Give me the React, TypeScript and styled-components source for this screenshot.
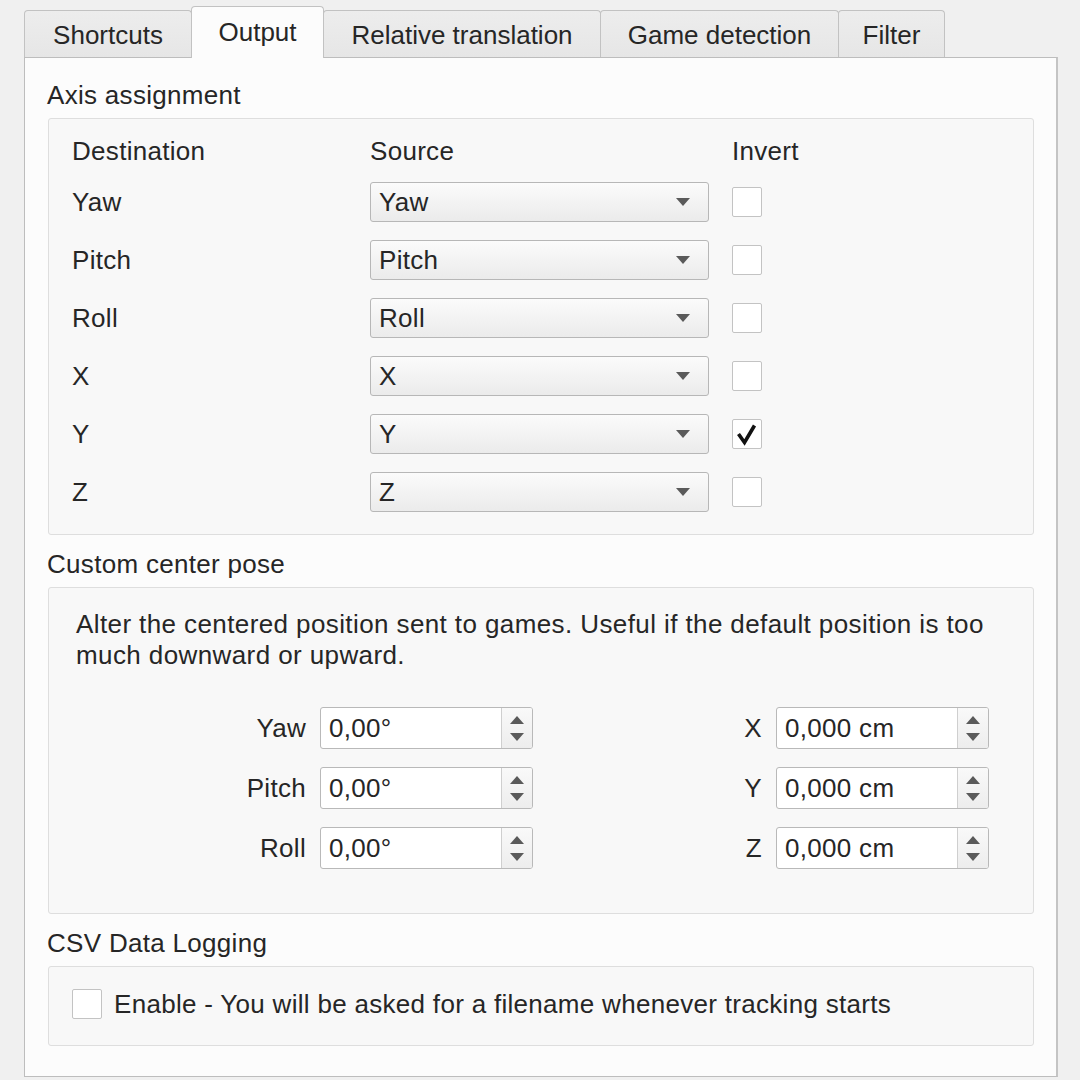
import { createGlobalStyle, styled } from "styled-components";

const GlobalStyle = createGlobalStyle`
  html, body {
    margin: 0;
    padding: 0;
    background: #f0f0f0;
  }
  body {
    font-family: "Liberation Sans", Arial, sans-serif;
    font-size: 26px;
    letter-spacing: 0.3px;
    color: #262626;
  }
`;

const tabs = [
  { label: "Shortcuts", width: 168 },
  { label: "Output", width: 133 },
  { label: "Relative translation", width: 278 },
  { label: "Game detection", width: 239 },
  { label: "Filter", width: 107 },
];

const axes = [
  { dest: "Yaw", src: "Yaw", inverted: false },
  { dest: "Pitch", src: "Pitch", inverted: false },
  { dest: "Roll", src: "Roll", inverted: false },
  { dest: "X", src: "X", inverted: false },
  { dest: "Y", src: "Y", inverted: true },
  { dest: "Z", src: "Z", inverted: false },
];

const poses = [
  { left: "Yaw", leftValue: "0,00°", right: "X", rightValue: "0,000 cm" },
  { left: "Pitch", leftValue: "0,00°", right: "Y", rightValue: "0,000 cm" },
  { left: "Roll", leftValue: "0,00°", right: "Z", rightValue: "0,000 cm" },
];

function Arrow(prop: { up?: boolean }) {
  return (
    <svg width="14" height="8" viewBox="0 0 14 8">
      {prop.up ? (
        <path d="M0 8 L7 0 L14 8 Z" fill="#5a5a5a" />
      ) : (
        <path d="M0 0 L14 0 L7 8 Z" fill="#5a5a5a" />
      )}
    </svg>
  );
}

function Check(prop: { checked?: boolean }) {
  return (
    <CheckBox>
      {prop.checked && (
        <svg width="30" height="30" viewBox="0 0 30 30">
          <path d="M6.5 15 L12.5 23.5 L22.5 6.5" fill="none" stroke="#111" strokeWidth="3.6" strokeLinejoin="miter" />
        </svg>
      )}
    </CheckBox>
  );
}

function Spin(prop: { value: string }) {
  return (
    <SpinBox>
      <SpinValue>{prop.value}</SpinValue>
      <SpinButtons>
        <Arrow up />
        <Arrow />
      </SpinButtons>
    </SpinBox>
  );
}

export default function App() {
  return (
    <>
      <GlobalStyle />
      <Page>
        <TabBar>
          {tabs.map((t) => (
            <Tab key={t.label} $width={t.width} $active={t.label === "Output"}>
              {t.label}
            </Tab>
          ))}
        </TabBar>
        <Pane>
          <GroupTitle>Axis assignment</GroupTitle>
          <AxisBox>
            <HeaderCell>Destination</HeaderCell>
            <HeaderCell>Source</HeaderCell>
            <HeaderCell>Invert</HeaderCell>
            {axes.map((a) => (
              <AxisRow key={a.dest}>
                <Label>{a.dest}</Label>
                <Combo>
                  <span>{a.src}</span>
                  <Arrow />
                </Combo>
                <Check checked={a.inverted} />
              </AxisRow>
            ))}
          </AxisBox>

          <GroupTitle $spaced>Custom center pose</GroupTitle>
          <PoseBox>
            <Description>
              Alter the centered position sent to games. Useful if the default position is too
              <br />
              much downward or upward.
            </Description>
            <PoseGrid>
              {poses.map((p) => (
                <PoseRow key={p.left}>
                  <PoseLabel>{p.left}</PoseLabel>
                  <Spin value={p.leftValue} />
                  <PoseLabel>{p.right}</PoseLabel>
                  <Spin value={p.rightValue} />
                </PoseRow>
              ))}
            </PoseGrid>
          </PoseBox>

          <GroupTitle $spaced>CSV Data Logging</GroupTitle>
          <LogBox>
            <Check />
            <Label>Enable - You will be asked for a filename whenever tracking starts</Label>
          </LogBox>
        </Pane>
      </Page>
    </>
  );
}

const Page = styled.div`
  width: 1080px;
  height: 1080px;
  box-sizing: border-box;
  padding: 6px 0 0 24px;
  overflow: hidden;
`;

const TabBar = styled.div`
  display: flex;
  align-items: flex-end;
  height: 52px;
  margin-bottom: -1px;
  position: relative;
  z-index: 1;
`;

const Tab = styled.div<{ $width: number; $active?: boolean }>`
  box-sizing: border-box;
  width: ${(p) => p.$width}px;
  height: ${(p) => (p.$active ? 52 : 47)}px;
  margin-bottom: ${(p) => (p.$active ? 0 : 1)}px;
  margin-left: -1px;
  &:first-child {
    margin-left: 0;
  }
  border: 1px solid #c2c2c2;
  border-bottom: none;
  border-radius: 4px 4px 0 0;
  background: ${(p) =>
    p.$active ? "#fcfcfc" : "linear-gradient(#ededed, #e6e6e6)"};
  position: relative;
  z-index: ${(p) => (p.$active ? 2 : 1)};
  display: flex;
  align-items: center;
  justify-content: center;
  padding-top: ${(p) => (p.$active ? 0 : 2)}px;
  letter-spacing: 0;
`;

const Pane = styled.div`
  box-sizing: border-box;
  width: 1034px;
  height: 1020px;
  border: 1px solid #bdbdbd;
  border-right: 2px solid #c4c4c4;
  background: #fcfcfc;
  padding: 22px 22px 0 23px;
  display: flex;
  flex-direction: column;
`;

const GroupTitle = styled.div<{ $spaced?: boolean }>`
  height: 30px;
  line-height: 30px;
  margin: ${(p) => (p.$spaced ? 14 : 0)}px 0 8px -1px;
`;

const GroupBox = styled.div`
  border: 1px solid #dedede;
  border-radius: 3px;
  background: #f8f8f8;
`;

const AxisBox = styled(GroupBox)`
  display: grid;
  grid-template-columns: 298px 362px 1fr;
  grid-template-rows: 26px repeat(6, 40px);
  row-gap: 18px;
  align-items: center;
  padding: 19px 23px 22px 23px;
`;

const AxisRow = styled.div`
  display: contents;
`;

const HeaderCell = styled.div`
  line-height: 26px;
`;

const Label = styled.div`
  line-height: 30px;
  white-space: nowrap;
`;

const Combo = styled.div`
  box-sizing: border-box;
  width: 339px;
  height: 40px;
  border: 1px solid #b7b7b7;
  border-radius: 3px;
  background: linear-gradient(#fbfbfb, #ebebeb);
  display: flex;
  align-items: center;
  justify-content: space-between;
  padding: 0 18px 0 8px;
`;

const CheckBox = styled.div`
  box-sizing: border-box;
  width: 30px;
  height: 30px;
  border: 1px solid #c3c3c3;
  border-radius: 2px;
  background: #ffffff;
  display: flex;
  align-items: center;
  justify-content: center;
  flex-shrink: 0;

  svg {
    margin: -1px;
  }
`;

const PoseBox = styled(GroupBox)`
  padding: 21px 27px 44px 27px;
`;

const Description = styled.div`
  line-height: 31px;
  white-space: nowrap;
  letter-spacing: 0.4px;
`;

const PoseGrid = styled.div`
  display: grid;
  grid-template-columns: 230px 213px 215px 213px;
  grid-auto-rows: 42px;
  column-gap: 14px;
  row-gap: 18px;
  align-items: center;
  margin-top: 36px;
`;

const PoseRow = styled.div`
  display: contents;
`;

const PoseLabel = styled.div`
  text-align: right;
`;

const SpinBox = styled.div`
  box-sizing: border-box;
  height: 42px;
  border: 1px solid #b9b9b9;
  border-radius: 3px;
  background: #ffffff;
  display: flex;
  align-items: stretch;
`;

const SpinValue = styled.div`
  flex: 1;
  display: flex;
  align-items: center;
  padding-left: 8px;
`;

const SpinButtons = styled.div`
  width: 30px;
  border-left: 1px solid #cfcfcf;
  background: linear-gradient(#f9f9f9, #ededed);
  border-radius: 0 2px 2px 0;
  display: flex;
  flex-direction: column;
  align-items: center;
  justify-content: center;
  gap: 9px;
`;

const LogBox = styled(GroupBox)`
  display: flex;
  align-items: center;
  gap: 12px;
  padding: 22px 23px 26px 23px;
`;
